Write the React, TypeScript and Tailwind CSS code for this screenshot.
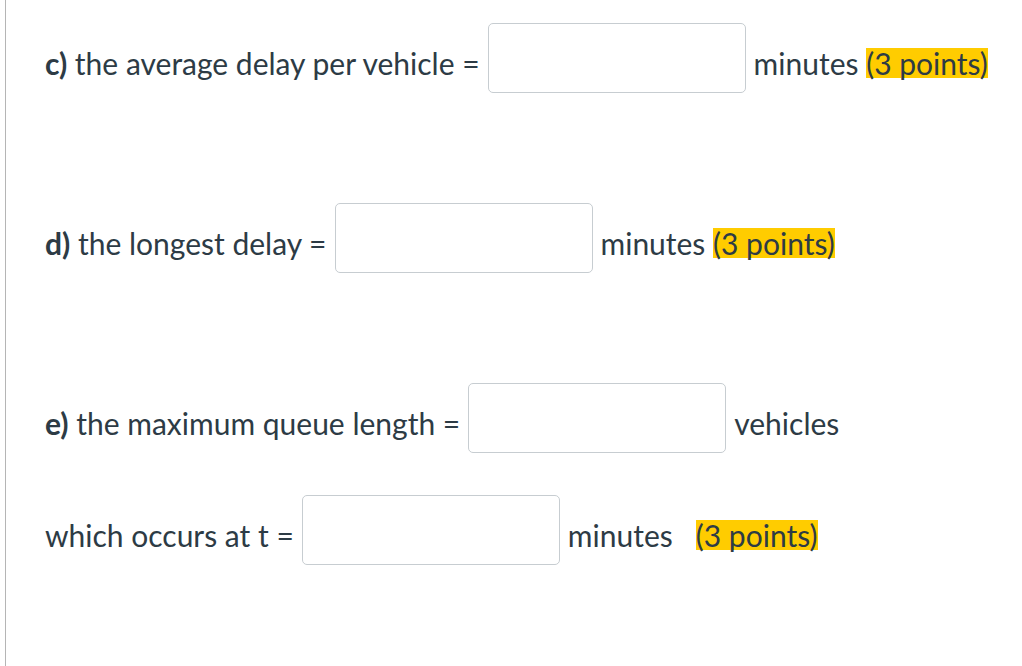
export default function App() {
  const box = "w-[258px] h-[70px] shrink-0 rounded-[5px] border border-[#c7cdd1] bg-white";
  const hl = "inline-block bg-[#ffcc00] leading-[30px]";
  return (
    <div className="min-h-[666px] w-[1022px] bg-white font-['Lato',sans-serif] text-[30px] leading-[40px] text-[#2d3b45]">
      <div className="ml-[5px] min-h-[666px] border-l border-[#b5b5b5] pl-[39px] pt-[23px]">
        <div className="flex items-end">
          <span className="pb-[10px]"><b className="font-bold">c)</b> the average delay per vehicle =</span>
          <div className={`${box} ml-[8px]`} />
          <span className="ml-[8px] pb-[10px]">minutes <span className={hl}>(3 points)</span></span>
        </div>
        <div className="mt-[110px] flex items-end">
          <span className="pb-[10px]"><b className="font-bold">d)</b> the longest delay =</span>
          <div className={`${box} ml-[8px]`} />
          <span className="ml-[8px] pb-[10px]">minutes <span className={hl}>(3 points)</span></span>
        </div>
        <div className="mt-[110px] flex items-end">
          <span className="pb-[10px]"><b className="font-bold">e)</b> the maximum queue length =</span>
          <div className={`${box} ml-[8px]`} />
          <span className="ml-[8px] pb-[10px]">vehicles</span>
        </div>
        <div className="mt-[42px] flex items-end">
          <span className="pb-[10px]">which occurs at t =</span>
          <div className={`${box} ml-[8px]`} />
          <span className="ml-[8px] pb-[10px]">minutes&nbsp;&nbsp; <span className={hl}>(3 points)</span></span>
        </div>
      </div>
    </div>
  );
}
